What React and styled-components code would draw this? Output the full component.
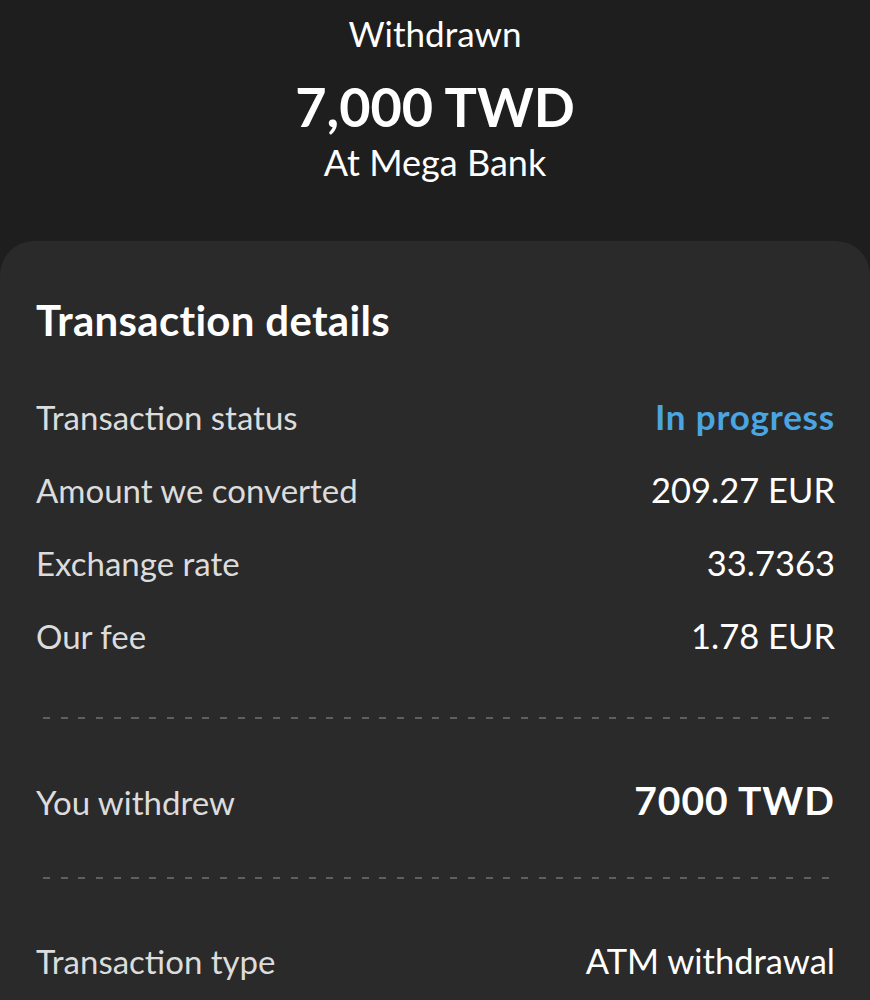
import React from "react";
import styled, { createGlobalStyle } from "styled-components";

const Global = createGlobalStyle`
  html, body { margin: 0; padding: 0; background: #1e1e1e; }
  body { font-family: Lato, "Noto Sans", sans-serif; -webkit-font-smoothing: antialiased; }
`;

const Page = styled.div`
  width: 870px;
  min-height: 1000px;
  background: #1e1e1e;
  display: flex;
  flex-direction: column;
`;

const Header = styled.header`
  display: flex;
  flex-direction: column;
  align-items: center;
  color: #ffffff;
  padding-top: 11px;
  height: 241px;
  box-sizing: border-box;
`;

const Status = styled.div`
  font-size: 35px;
  line-height: 44px;
  font-weight: 400;
`;

const Amount = styled.div`
  font-size: 54px;
  line-height: 64px;
  font-weight: 700;
  margin-top: 20px;
`;

const Place = styled.div`
  font-size: 36px;
  line-height: 44px;
  font-weight: 400;
  margin-top: 1px;
`;

const Card = styled.section`
  flex: 1;
  background: #2a2a2a;
  border-radius: 34px 34px 0 0;
  padding: 53px 35px 0 36px;
  display: flex;
  flex-direction: column;
`;

const Title = styled.h2`
  margin: 0 0 34px;
  font-size: 42px;
  line-height: 52px;
  font-weight: 700;
  letter-spacing: 0.3px;
  color: #ffffff;
`;

const Row = styled.div`
  display: flex;
  justify-content: space-between;
  align-items: baseline;
  height: 73px;
  line-height: 73px;
`;

const Label = styled.span`
  font-size: 33px;
  color: #dcdcdc;
`;

const Value = styled.span`
  font-size: ${p => (p.$big ? "39px" : p.$accent ? "35px" : "34.5px")};
  font-weight: ${p => (p.$big || p.$accent ? 700 : 400)};
  letter-spacing: ${p => (p.$big ? "1px" : p.$accent ? "0.8px" : "0")};
  color: ${p => (p.$accent ? "#4aa5e0" : "#ffffff")};
`;

const Dashes = styled.div`
  height: 2px;
  flex-shrink: 0;
  margin: ${p => p.$top}px 2px ${p => p.$bottom}px 7px;
  background: repeating-linear-gradient(to right, #5f5f5f 0 7px, transparent 7px 17.7px);
`;

export default function App() {
  return (
    <Page>
      <Global />
      <Header>
        <Status>Withdrawn</Status>
        <Amount>7,000 TWD</Amount>
        <Place>At Mega Bank</Place>
      </Header>
      <Card>
        <Title>Transaction details</Title>
        <Row>
          <Label>Transaction status</Label>
          <Value $accent>In progress</Value>
        </Row>
        <Row>
          <Label>Amount we converted</Label>
          <Value>209.27 EUR</Value>
        </Row>
        <Row>
          <Label>Exchange rate</Label>
          <Value>33.7363</Value>
        </Row>
        <Row>
          <Label>Our fee</Label>
          <Value>1.78 EUR</Value>
        </Row>
        <Dashes $top={45} $bottom={45} />
        <Row>
          <Label>You withdrew</Label>
          <Value $big>7000 TWD</Value>
        </Row>
        <Dashes $top={40} $bottom={45} />
        <Row>
          <Label>Transaction type</Label>
          <Value>ATM withdrawal</Value>
        </Row>
      </Card>
    </Page>
  );
}
